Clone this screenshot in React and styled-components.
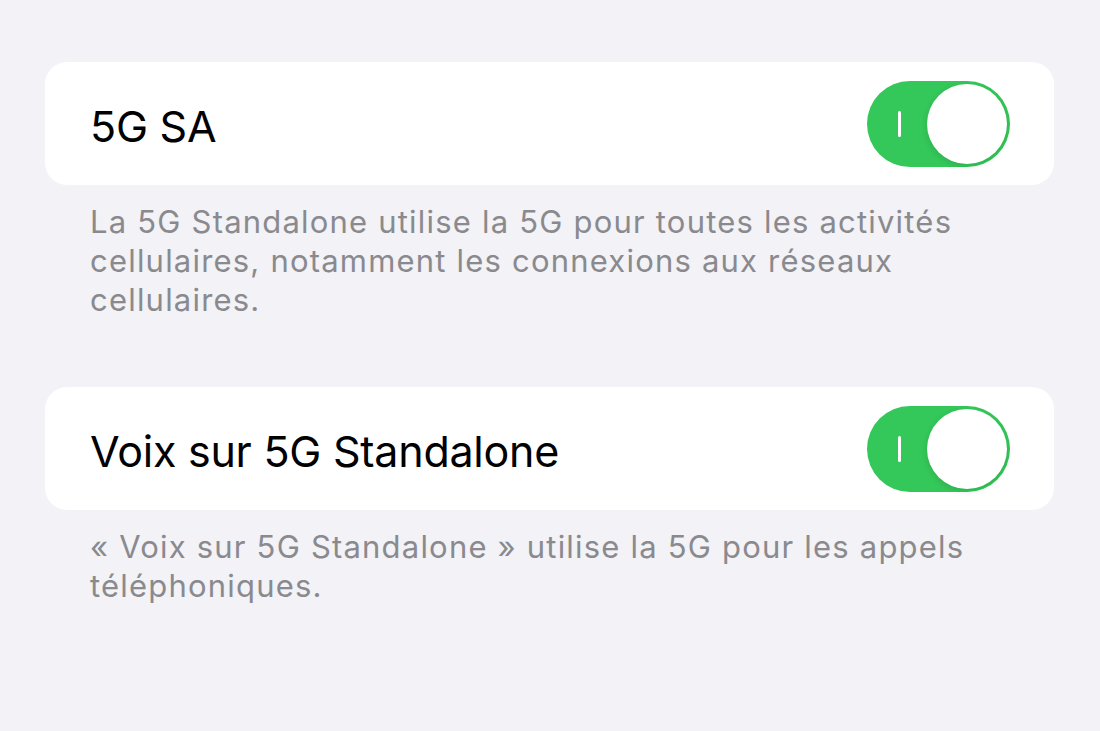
import React from 'react';
import styled, { createGlobalStyle } from 'styled-components';

const GlobalStyle = createGlobalStyle`
  html, body {
    margin: 0;
    padding: 0;
    background: #f2f2f7;
  }

  body {
    font-family: Inter, "Liberation Sans", sans-serif;
    -webkit-font-smoothing: antialiased;
  }
`;

const Page = styled.div`
  width: 1100px;
  height: 731px;
  box-sizing: border-box;
  padding: 62px 46px 0 45px;
  background: #f2f2f7;
  overflow: hidden;
`;

const Section = styled.section`
  margin-bottom: 68px;
`;

const Card = styled.div`
  display: flex;
  align-items: center;
  justify-content: space-between;
  height: 123px;
  box-sizing: border-box;
  padding: 0 44px 0 45px;
  background: #ffffff;
  border-radius: 22px;
`;

const Label = styled.span`
  font-size: 43px;
  color: #000000;
  letter-spacing: -0.25px;
  transform: translateY(2px);
`;

const Footer = styled.p`
  margin: 17px 0 0;
  padding: 0 40px 0 45px;
  font-size: 31px;
  line-height: 39px;
  letter-spacing: 1.2px;
  color: #8a8a8e;
`;

const Track = styled.button`
  position: relative;
  flex: none;
  width: 143px;
  height: 86px;
  padding: 0;
  border: none;
  border-radius: 43px;
  background: ${({ $on }) => ($on ? '#34c759' : '#e9e9eb')};
  cursor: pointer;
`;

const OnMark = styled.span`
  position: absolute;
  left: 31px;
  top: 30px;
  width: 3px;
  height: 26px;
  border-radius: 2px;
  background: #ffffff;
`;

const Knob = styled.span`
  position: absolute;
  top: 3px;
  left: ${({ $on }) => ($on ? '60px' : '3px')};
  width: 80px;
  height: 80px;
  border-radius: 50%;
  background: #ffffff;
  box-shadow: 0 2px 6px rgba(0, 0, 0, 0.12);
`;

const Toggle = ({ on }) => (
  <Track $on={on} aria-pressed={on}>
    {on && <OnMark />}
    <Knob $on={on} />
  </Track>
);

const settings = [
  {
    label: '5G SA',
    footer:
      'La 5G Standalone utilise la 5G pour toutes les activités cellulaires, notamment les connexions aux réseaux cellulaires.',
  },
  {
    label: 'Voix sur 5G Standalone',
    footer: '« Voix sur 5G Standalone » utilise la 5G pour les appels téléphoniques.',
  },
];

export default function App() {
  return (
    <>
      <GlobalStyle />
      <Page>
        {settings.map(item => (
          <Section key={item.label}>
            <Card>
              <Label>{item.label}</Label>
              <Toggle on />
            </Card>
            <Footer>{item.footer}</Footer>
          </Section>
        ))}
      </Page>
    </>
  );
}
